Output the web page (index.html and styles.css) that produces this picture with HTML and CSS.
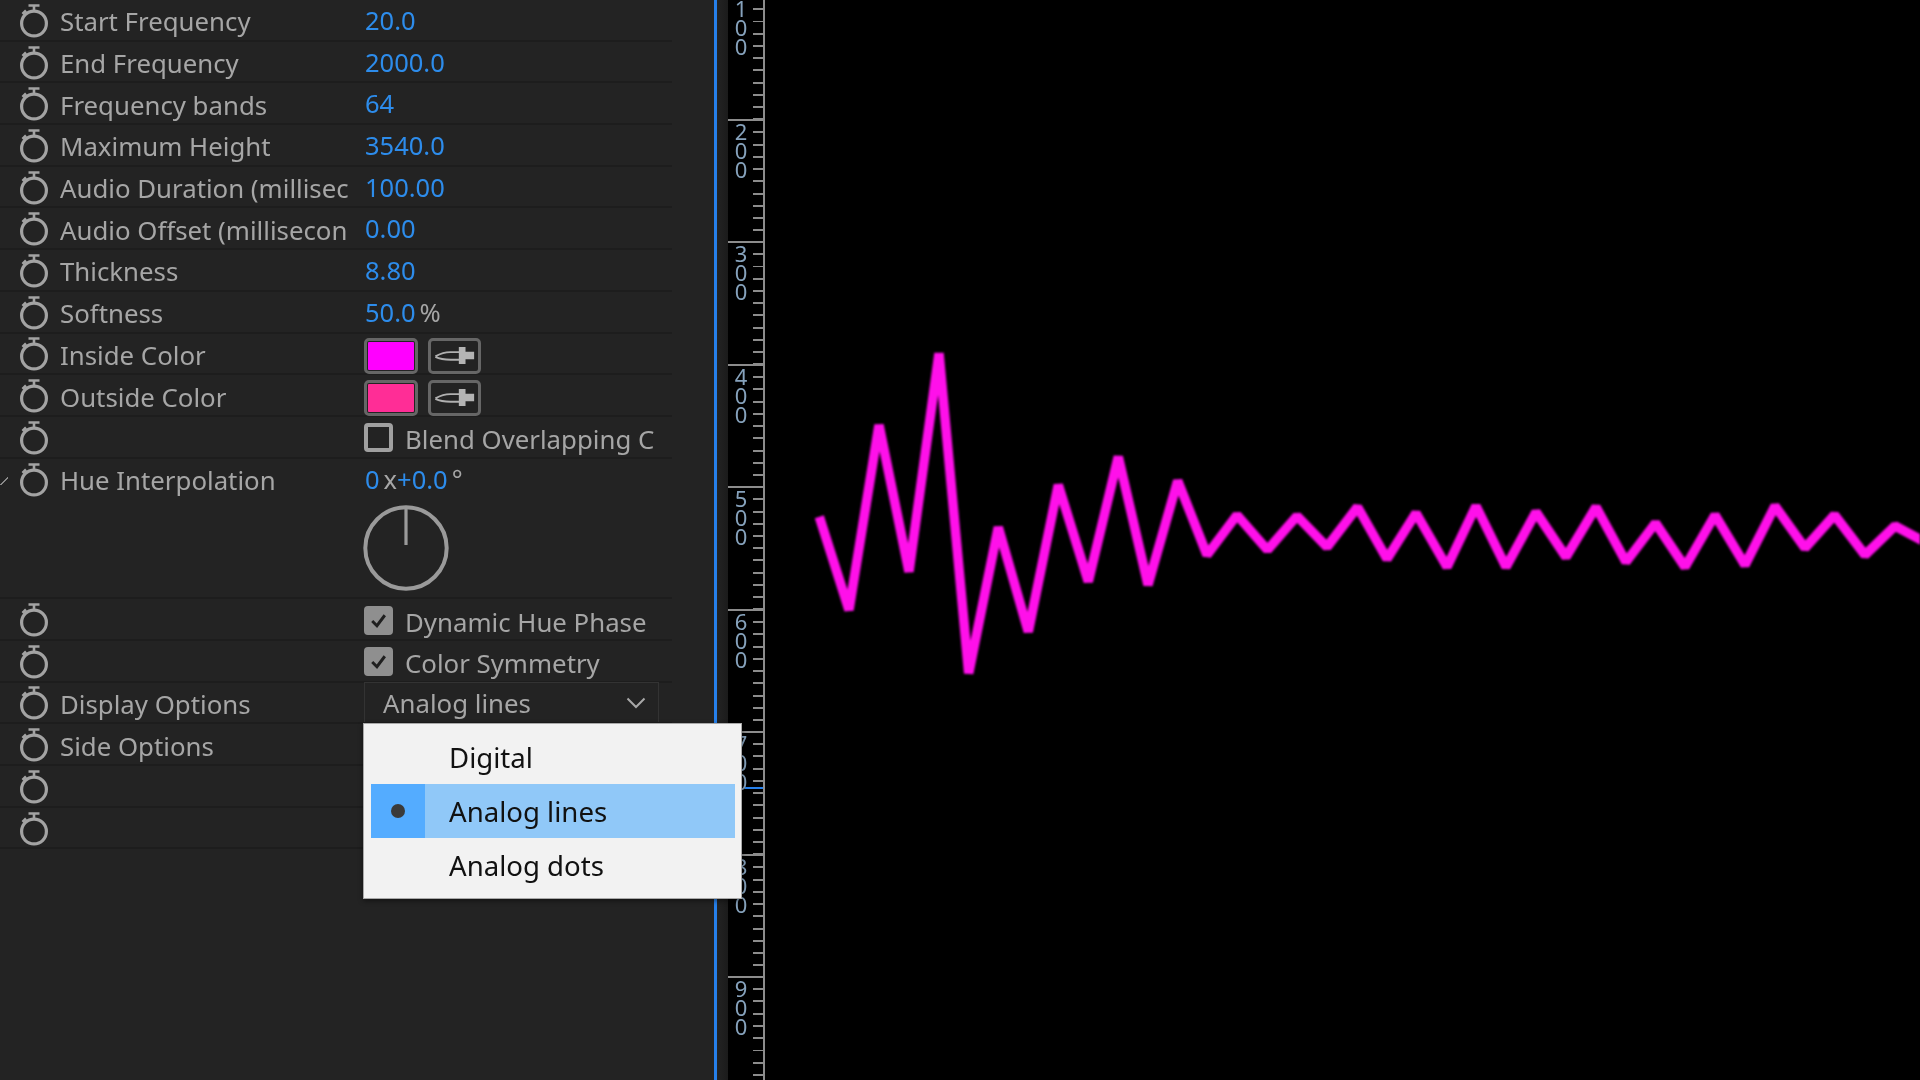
FILE: index.html
```html
<!DOCTYPE html>
<html lang="en">
<head>
<meta charset="utf-8">
<title>Effect Controls</title>
<link rel="stylesheet" href="styles.css">
</head>
<body>
<svg class="defs" width="0" height="0" aria-hidden="true">
  <symbol id="watch" viewBox="0 0 30 34">
    <path d="M9.5 1.5h11M15 1.5v6M3.5 10l3.5-3.5" fill="none" stroke="currentColor" stroke-width="2.6"/>
    <circle cx="15" cy="19.5" r="12.4" fill="none" stroke="currentColor" stroke-width="3.2"/>
  </symbol>
  <symbol id="dropper" viewBox="0 0 46 24">
    <path d="M2.5 13C7 10.500 12 8.500 18 8.500h10.500M2.500 13.500c5 2.500 10 3 16 3h10" fill="none" stroke="#b0b0b0" stroke-width="2"/>
    <path d="M27 3h7v5h9v8h-9v5h-7z" fill="#b4b4b4"/>
  </symbol>
</svg>
<div class="app">
  <section class="panel">
    <div class="rows">
      <div class="row"><span class="twirl"></span><svg class="watch"><use href="#watch"/></svg><span class="label">Start Frequency</span><span class="value">20.0</span></div>
      <div class="row"><span class="twirl"></span><svg class="watch"><use href="#watch"/></svg><span class="label">End Frequency</span><span class="value">2000.0</span></div>
      <div class="row"><span class="twirl"></span><svg class="watch"><use href="#watch"/></svg><span class="label">Frequency bands</span><span class="value">64</span></div>
      <div class="row"><span class="twirl"></span><svg class="watch"><use href="#watch"/></svg><span class="label">Maximum Height</span><span class="value">3540.0</span></div>
      <div class="row"><span class="twirl"></span><svg class="watch"><use href="#watch"/></svg><span class="label">Audio Duration (millisec</span><span class="value">100.00</span></div>
      <div class="row"><span class="twirl"></span><svg class="watch"><use href="#watch"/></svg><span class="label">Audio Offset (millisecon</span><span class="value">0.00</span></div>
      <div class="row"><span class="twirl"></span><svg class="watch"><use href="#watch"/></svg><span class="label">Thickness</span><span class="value">8.80</span></div>
      <div class="row"><span class="twirl"></span><svg class="watch"><use href="#watch"/></svg><span class="label">Softness</span><span class="value">50.0<span class="unit">%</span></span></div>
      <div class="row"><span class="twirl"></span><svg class="watch"><use href="#watch"/></svg><span class="label">Inside Color</span><span class="color-cell"><span class="swatch swatch-inside"></span><span class="drop-btn"><svg class="dropper"><use href="#dropper"/></svg></span></span></div>
      <div class="row"><span class="twirl"></span><svg class="watch"><use href="#watch"/></svg><span class="label">Outside Color</span><span class="color-cell"><span class="swatch swatch-outside"></span><span class="drop-btn"><svg class="dropper"><use href="#dropper"/></svg></span></span></div>
      <div class="row"><span class="twirl"></span><svg class="watch"><use href="#watch"/></svg><span class="label"></span><span class="check-cell"><span class="check"></span><span class="check-text">Blend Overlapping C</span></span></div>
      <div class="row row-hue">
        <div class="hue-top"><span class="twirl twirl-open"></span><svg class="watch"><use href="#watch"/></svg><span class="label">Hue Interpolation</span><span class="value">0<span class="unit">x</span>+0.0<span class="unit">°</span></span></div>
        <svg class="dial" viewBox="0 0 86 86"><circle cx="43" cy="43" r="40.700" fill="none" stroke="#9a9a9a" stroke-width="4"/><path d="M43 2v38" stroke="#9a9a9a" stroke-width="3.200"/></svg>
      </div>
      <div class="row"><span class="twirl"></span><svg class="watch"><use href="#watch"/></svg><span class="label"></span><span class="check-cell"><span class="check check-on"><svg viewBox="0 0 20 20"><path d="M4 10.500l4.500 4.500L16 5" fill="none" stroke="#1f1f1f" stroke-width="2.800"/></svg></span><span class="check-text">Dynamic Hue Phase</span></span></div>
      <div class="row"><span class="twirl"></span><svg class="watch"><use href="#watch"/></svg><span class="label"></span><span class="check-cell"><span class="check check-on"><svg viewBox="0 0 20 20"><path d="M4 10.500l4.500 4.500L16 5" fill="none" stroke="#1f1f1f" stroke-width="2.800"/></svg></span><span class="check-text">Color Symmetry</span></span></div>
      <div class="row"><span class="twirl"></span><svg class="watch"><use href="#watch"/></svg><span class="label">Display Options</span><span class="select"><span>Analog lines</span><svg class="chev" viewBox="0 0 20 12"><path d="M1.500 1.500 10 10l8.500-8.500" fill="none" stroke="#a8a8a8" stroke-width="2"/></svg></span></div>
      <div class="row"><span class="twirl"></span><svg class="watch"><use href="#watch"/></svg><span class="label">Side Options</span></div>
      <div class="row"><span class="twirl"></span><svg class="watch"><use href="#watch"/></svg></div>
      <div class="row"><span class="twirl"></span><svg class="watch"><use href="#watch"/></svg></div>
    </div>
    <div class="menu">
      <div class="menu-item"><span class="menu-icon"></span><span class="menu-text">Digital</span></div>
      <div class="menu-item menu-item-on"><span class="menu-icon"><span class="dot"></span></span><span class="menu-text">Analog lines</span></div>
      <div class="menu-item"><span class="menu-icon"></span><span class="menu-text">Analog dots</span></div>
    </div>
  </section>
  <div class="sash"></div>
  <div class="gutter"></div>
  <div class="ruler">
    <div class="seg"><span class="digits">100</span></div>
    <div class="seg"><span class="digits">200</span></div>
    <div class="seg"><span class="digits">300</span></div>
    <div class="seg"><span class="digits">400</span></div>
    <div class="seg"><span class="digits">500</span></div>
    <div class="seg"><span class="digits">600</span></div>
    <div class="seg"><span class="digits">700</span></div>
    <div class="seg"><span class="digits">800</span></div>
    <div class="seg"><span class="digits">900</span></div>
    <span class="ruler-mark"></span>
  </div>
  <div class="canvas">
    <svg class="wave" viewBox="765 0 1155 1080" preserveAspectRatio="none">
      <polyline points="819.3,516.7 849,610 879,425 909,571.7 939,353.3 968.7,673.3 998.3,527.3 1028.3,631.7 1058.3,485 1088.3,581.7 1118.3,456.7 1148,585 1177.7,480.7 1207,555 1237,515 1267.5,550 1297,516 1327,547 1357.5,507 1387,559 1416,513 1447,567 1476,506 1506,567 1536,512 1566,557 1596,507 1626,562 1655.5,523 1685,567 1715,515 1745,565 1775,506 1805,548 1834.5,515 1865,555 1895,526 1925,542"/>
    </svg>
  </div>
</div>
</body>
</html>
```
FILE: styles.css
```css
* { box-sizing: border-box; }
html, body { margin: 0; height: 100%; background: #000; overflow: hidden; }
.defs { position: absolute; }
.app { display: flex; width: 1920px; height: 1080px; font-family: "Noto Sans", "Open Sans", sans-serif; }

.panel { position: relative; z-index: 2; width: 714px; height: 1080px; background: #232323; flex: none; }
.rows { width: 672px; filter: blur(.55px); }
.row { display: flex; align-items: center; height: 41.7px; border-bottom: 2px solid #1d1d1d; color: #a6a6a6; font-size: 25.8px; }
.row-hue { display: block; height: 140.7px; }
.hue-top { display: flex; align-items: center; height: 40px; }
.twirl { width: 19px; flex: none; }
.twirl-open { height: 8px; margin-top: 4px; background: linear-gradient(135deg, transparent 45%, #8a8a8a 45%, #8a8a8a 60%, transparent 60%) 0 0 / 8px 8px no-repeat; }
.watch { width: 30px; height: 34px; margin-top: 2px; flex: none; color: #a3a3a3; }
.label { width: 305px; margin-left: 11px; margin-top: 3px; flex: none; overflow: hidden; white-space: nowrap; }
.value { color: #2d8ceb; font-size: 25.5px; white-space: nowrap; }
.unit { color: #a6a6a6; margin-left: 4px; }
.dial { display: block; width: 86px; height: 86px; margin: 6px 0 0 363px; }

.color-cell { display: flex; gap: 10px; margin-left: -1px; margin-top: 5px; }
.swatch { display: block; width: 54px; height: 36px; padding: 1px; border: 3.5px solid #666; border-radius: 5px; background-clip: content-box; }
.swatch-inside { background-color: #ff00ff; }
.swatch-outside { background-color: #ff2d96; }
.drop-btn { display: flex; align-items: center; justify-content: center; width: 53px; height: 36px; border: 3.5px solid #666; border-radius: 5px; }
.dropper { width: 44px; height: 23px; }

.check-cell { display: flex; align-items: center; margin-left: -1px; margin-top: 5px; }
.check { display: block; width: 29px; height: 29px; border: 4px solid #a0a0a0; border-radius: 4px; margin-top: -3px; }
.check-on { background: #8f8f8f; border-color: #8f8f8f; }
.check-on svg { display: block; width: 21px; height: 21px; }
.check-text { margin-left: 12px; white-space: nowrap; }

.select { display: flex; align-items: center; justify-content: space-between; width: 295px; height: 40px; margin-left: -1px; padding: 0 12px 0 18px; border: 1px solid #333; border-bottom: 0; }
.chev { width: 20px; height: 12px; }

.menu { position: absolute; left: 363px; top: 723px; width: 379px; height: 176px; padding: 6px 6px 7px 7px; background: #f2f2f2; border: 1px solid #a9a9a9; box-shadow: 0 2px 5px rgba(0, 0, 0, .45); color: #111; font-size: 27.6px; line-height: 52px; filter: blur(.35px); }
.menu-item { display: flex; align-items: center; height: 54px; }
.menu-item-on { background: #90c8f8; }
.menu-icon { display: flex; align-items: center; justify-content: center; width: 54px; height: 100%; }
.menu-item-on .menu-icon { background: #54acff; }
.dot { width: 14px; height: 14px; border-radius: 50%; background: #3a3a3a; }
.menu-text { margin-left: 24px; }

.sash { width: 3px; flex: none; background: #2680eb; filter: blur(.4px); }
.gutter { width: 11px; flex: none; background: linear-gradient(90deg, #232323, #1b1b1b); }
.ruler { position: relative; width: 37px; height: 1080px; flex: none; background: #000; border-right: 2.5px solid #8c8c8c; overflow: hidden; filter: blur(.45px); }
.seg { height: 122.5px; border-top: 2px solid #8c8c8c; background: repeating-linear-gradient(180deg, transparent 0, transparent 10.25px, #8c8c8c 10.25px, #8c8c8c 12.25px) right top / 10px 100% no-repeat; }
.seg:first-child { margin-top: -4px; }
.digits { display: block; width: 14px; margin-left: 6px; padding-top: 1px; color: #86a2bc; font-size: 22px; line-height: 19px; text-align: center; word-break: break-all; }
.ruler-mark { position: absolute; left: 17px; right: 0; top: 787px; height: 2px; background: #2680eb; }

.canvas { flex: 1; height: 1080px; background: #000; overflow: hidden; }
.wave { display: block; width: 100%; height: 100%; filter: blur(.9px); }
.wave polyline { fill: none; stroke: #ff10ea; stroke-width: 9.5; stroke-linejoin: bevel; }
```
